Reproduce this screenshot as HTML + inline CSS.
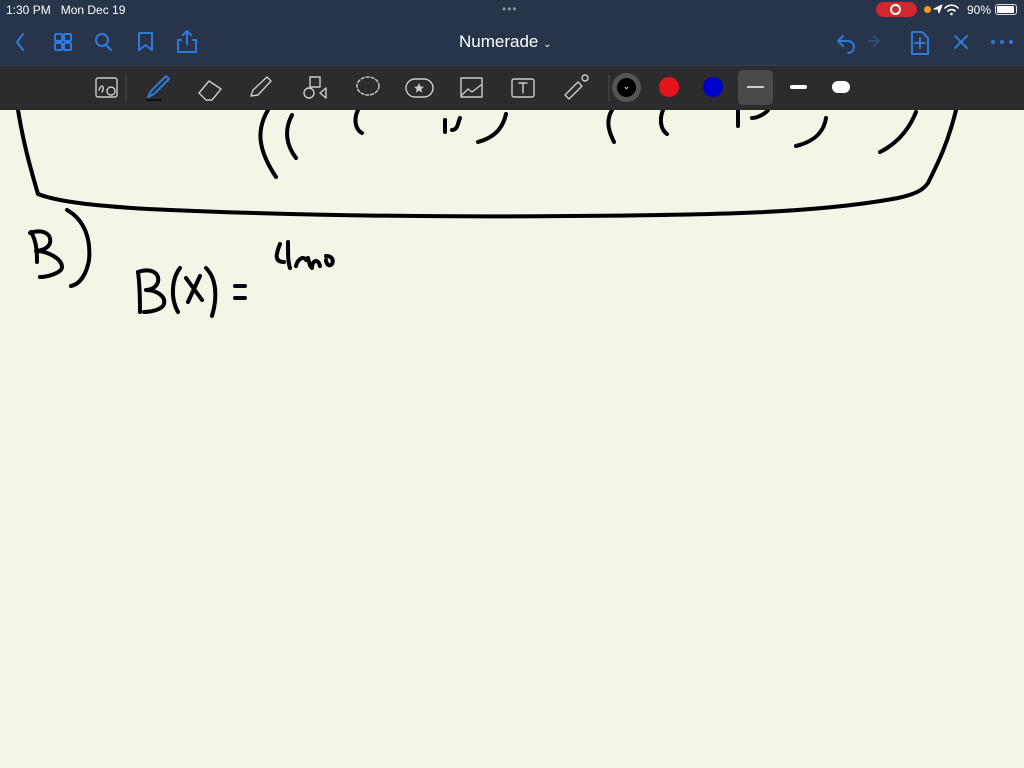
<!DOCTYPE html>
<html><head><meta charset="utf-8"><style>
*{margin:0;padding:0;box-sizing:border-box}
body{width:1024px;height:768px;overflow:hidden;background:#f4f4e7;font-family:"Liberation Sans",sans-serif;position:relative}
#top{position:absolute;left:0;top:0;width:1024px;height:65px;background:#273449}
#tb{position:absolute;left:0;top:65px;width:1024px;height:45px;background:#2c2c2e;border-top:1px solid #3a3f48}
.t{position:absolute;color:#fff;font-size:12px}
svg{position:absolute}
</style></head><body>
<div id="top">
<div class="t" style="left:6px;top:3px">1:30 PM&nbsp;&nbsp; Mon Dec 19</div>
<div class="t" style="left:502px;top:2px;color:#8a93a3;font-size:12px;letter-spacing:1px">•••</div>
<div style="position:absolute;left:876px;top:2px;width:41px;height:15px;border-radius:8px;background:#d3262d"></div>
<div style="position:absolute;left:890px;top:4px;width:11px;height:11px;border-radius:50%;border:2px solid #fff"></div>
<div style="position:absolute;left:924px;top:6px;width:7px;height:7px;border-radius:50%;background:#f09a1d"></div>
<div class="t" style="left:967px;top:3px">90%</div>
<div style="position:absolute;left:995px;top:4px;width:22px;height:11px;border:1px solid #ddd;border-radius:3px;padding:1px"><div style="width:17px;height:7px;background:#fff;border-radius:1px"></div></div>
<div class="t" style="left:459px;top:32px;font-size:17px">Numerade <span style="font-size:10px">⌄</span></div>
</div>
<svg width="1024" height="110" style="left:0;top:0" fill="none" stroke="#2f7ad9" stroke-width="2" stroke-linecap="round" stroke-linejoin="round">
<path d="M942 5l-8 4 4 0 1 4z" fill="#fff" stroke="#fff" stroke-width="1"/>
<path d="M945 8a9 9 0 0 1 13 0M948 11a5 5 0 0 1 7 0" stroke="#fff" stroke-width="1.6"/><circle cx="951.5" cy="14" r="1.3" fill="#fff" stroke="none"/>
<path d="M23 34l-6 8 6 8"/>
<rect x="55" y="34" width="7" height="7" rx="1"/><rect x="64" y="34" width="7" height="7" rx="1"/><rect x="55" y="43" width="7" height="7" rx="1"/><rect x="64" y="43" width="7" height="7" rx="1"/>
<circle cx="102" cy="40" r="6"/><path d="M106 45l5 5"/>
<path d="M139 33h13v17l-6.5-5-6.5 5z"/>
<path d="M181 40h-3v12h18v-12h-3M187 44v-13M183 35l4-4 4 4"/>
<path d="M843 36l-5 5 5 5M838 41h10a6 6 0 0 1 0 12"/>
<path d="M874 36l5 5-5 5M879 41h-10" stroke="#2d4a74"/>
<path d="M912 32h10l6 6v16h-16zM920 38v10M915 43h10"/>
<path d="M955 36l12 12M967 36l-12 12"/>
<g fill="#2f7ad9" stroke="none"><circle cx="993" cy="42" r="2"/><circle cx="1002" cy="42" r="2"/><circle cx="1011" cy="42" r="2"/></g>
</svg>
<div id="tb"></div>
<svg width="1024" height="45" style="left:0;top:65px" fill="none" stroke="#ccc" stroke-width="1.4" stroke-linecap="round" stroke-linejoin="round">
<rect x="96" y="13" width="21" height="19" rx="2"/><circle cx="111" cy="26" r="4"/><path d="M99 25c3-8 6-2 3 2"/>
<line x1="126" y1="10" x2="126" y2="36" stroke="#444"/>
<path d="M148 32l3-6 15-15 3 3-15 15z" stroke="#2f7ad9" stroke-width="2"/><path d="M147 35h14" stroke="#111" stroke-width="2"/>
<path d="M199 28l10-12 12 8-9 11h-6z"/>
<path d="M251 31l2-6 14-13 4 4-13 14z"/>
<rect x="310" y="12" width="10" height="10"/><circle cx="309" cy="28" r="5"/><path d="M326 23l-6 5 6 5z"/>
<ellipse cx="368" cy="21" rx="11" ry="9" stroke-dasharray="3 2"/>
<rect x="406" y="14" width="27" height="18" rx="9"/><path d="M419 18l1.5 3.5 3.5.3-2.7 2.3.9 3.5-3.2-2-3.2 2 .9-3.5-2.7-2.3 3.5-.3z" fill="#ccc" stroke="none"/>
<rect x="461" y="13" width="21" height="19"/><path d="M462 30l6-6 4 3 9-7"/>
<rect x="512" y="14" width="22" height="18" rx="2"/><path d="M519 18h8M523 18v10"/>
<path d="M565 30l13-13 4 4-13 13z"/><circle cx="585" cy="13" r="3"/>
<line x1="609" y1="10" x2="609" y2="36" stroke="#444"/>
</svg>
<div style="position:absolute;left:612px;top:73px;width:29px;height:29px;border-radius:50%;background:#555"></div>
<div style="position:absolute;left:617px;top:78px;width:19px;height:19px;border-radius:50%;background:#000;color:#fff;font-size:9px;text-align:center;line-height:17px">⌄</div>
<div style="position:absolute;left:659px;top:77px;width:20px;height:20px;border-radius:50%;background:#e8141c"></div>
<div style="position:absolute;left:703px;top:77px;width:20px;height:20px;border-radius:50%;background:#0000cc"></div>
<div style="position:absolute;left:738px;top:70px;width:35px;height:35px;border-radius:5px;background:#4a4a4c"></div>
<div style="position:absolute;left:747px;top:86px;width:17px;height:2px;background:#ccc"></div>
<div style="position:absolute;left:790px;top:85px;width:17px;height:4px;background:#fff;border-radius:2px"></div>
<div style="position:absolute;left:832px;top:81px;width:18px;height:12px;background:#fff;border-radius:6px"></div>
<svg width="1024" height="658" style="left:0;top:110px" fill="none" stroke="#000" stroke-width="4" stroke-linecap="round" stroke-linejoin="round">
<path d="M18 0c5 30 10 50 20 84 20 8 60 12 110 15 150 7 300 8 420 7 150-1 250-3 330-18 18-4 25-8 30-15 10-20 20-40 28-73"/>
<path d="M268 0c-12 20-10 40 8 67M292 5c-8 15-6 30 4 43M358 0c-5 10-2 20 4 23M445 10v12M452 20c6 0 6-8 8-12M478 32c18-5 25-15 28-28M612 0c-6 10-4 20 2 32M663 0c-4 10-2 20 4 24M738 0v16M752 8c6 0 14-5 16-8M796 36c20-5 28-15 30-28M880 42c20-10 30-25 36-40"/>
<path d="M31 122c6 10 6 22 6 30M30 123c12-4 22 0 20 10-2 6-10 8-14 8 12 0 26 8 26 16 0 6-15 10-22 10"/>
<path d="M67 100c18 10 24 30 22 50-2 12-8 24-18 26"/>
<path d="M138 162c2 14 2 28 2 40M138 162c12-4 22 0 20 10-2 6-8 8-12 8 10 0 20 6 18 14-2 6-14 8-20 8"/>
<path d="M180 158c-8 10-10 30-2 44M186 168l16 22M200 166l-12 26M206 158c10 10 12 28 6 48M235 176h10M235 188h10"/>
<path d="M280 134c-4 10-6 18 4 18M288 132c0 14 0 20 2 26M296 156c2-8 8-10 10-6M308 148c2 8 2 8 4 10 0-8 6-10 8-2M326 146c6 0 8 4 6 8-4 4-6-2-6-4"/>
</svg>
</body></html>
